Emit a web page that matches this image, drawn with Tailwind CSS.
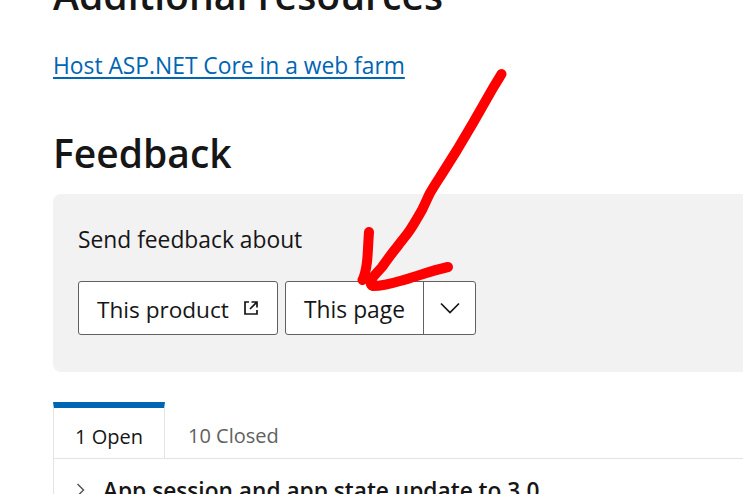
<!DOCTYPE html>
<html lang="en">
<head>
  <meta charset="UTF-8">
  <meta name="viewport" content="width=device-width, initial-scale=1.0">
  <title>Feedback</title>
  <script src="https://cdn.jsdelivr.net/npm/@tailwindcss/browser@4"></script>
</head>
<body class="bg-white h-[494px] overflow-hidden relative font-['Open_Sans',sans-serif] text-[#161616]">
  <main class="pl-[53px] -mr-6 -mt-[25px]">
    <h2 class="text-[39.2px] leading-[40px] font-semibold whitespace-nowrap">Additional resources</h2>

    <a href="#" class="block mt-[35px] text-[22.8px] leading-[32px] text-[#0065b3] underline underline-offset-[3px] decoration-[1.5px]">Host ASP.NET Core in a web farm</a>

    <h2 class="mt-[46px] text-[39px] leading-[50px] font-semibold">Feedback</h2>

    <section class="mt-[16px] h-[178px] bg-[#f2f2f2] rounded-l-lg pl-[25px] pt-[30px]">
      <p class="text-[22.8px] leading-[32px]">Send feedback about</p>
      <div class="flex mt-[25px]">
        <button class="h-[54px] w-[200px] bg-white border border-[#616161] rounded-[3px] flex items-center pl-[18px] gap-[15px]">
          <span class="text-[22.6px] pt-[3px]">This product</span>
          <svg class="w-[14px] h-[14px]" viewBox="0 0 14 14" fill="none" stroke="#161616" stroke-width="1.7">
            <path d="M5 1H1v12h12V9"/><path d="M7.5 1H13v5.5M13 1L6 8"/>
          </svg>
        </button>
        <div class="ml-[7px] flex h-[54px] bg-white border border-[#616161] rounded-[3px]">
          <button class="w-[138px] border-r border-[#616161] text-[22.8px] pt-[5px]">This page</button>
          <button class="w-[51px] flex items-center justify-center">
            <svg class="w-[20px] h-[12px]" viewBox="0 0 20 12" fill="none" stroke="#161616" stroke-width="1.7"><path d="M1 1.5l9 9 9-9"/></svg>
          </button>
        </div>
      </div>
    </section>

    <div class="mt-[30px]">
      <div class="flex h-[57px] border-b border-[#e3e3e3]">
        <div class="w-[112px] border-t-[6px] border-t-[#0065b3] border-x border-x-[#e3e3e3] flex items-center justify-center text-[20px] -mb-px pt-[6px]">1 Open</div>
        <div class="pl-[23px] flex items-center text-[20px] text-[#616161] pt-[12px]">10 Closed</div>
      </div>
      <div class="border-l border-[#e3e3e3] flex items-center pl-[22px] pt-[18px] gap-[18px]">
        <svg class="w-[9px] h-[14px] shrink-0 -mt-[3px]" viewBox="0 0 9 14" fill="none" stroke="#505050" stroke-width="1.4"><path d="M1.5 1L7.5 7l-6 6"/></svg>
        <span class="text-[22.7px] leading-[28px] font-semibold whitespace-nowrap">App session and app state update to 3.0</span>
      </div>
    </div>
  </main>

  <!-- red marker arrow drawn over the page -->
  <svg class="absolute inset-0 w-[743px] h-[494px] pointer-events-none" viewBox="0 0 743 494" fill="none" stroke="#ff0000" stroke-width="10" stroke-linecap="round" stroke-linejoin="round">
    <path d="M501.5 74C498 80 496 83 493 88L473 123L457 150L440 177C436 183 433 188 430 193C427 199 425 204 422 210C418 217 414 224 410 230C406 236 402 240 397 247C392 253 387 260 382 267L373 277"/>
    <path d="M369 232C368 245 368 253 367 262C366 270 365 275 362.5 280"/>
    <path d="M448 267C430 271 415 277 400 281C390 284 382 286 373 286C370 285 370 282 372 279"/>
  </svg>
</body>
</html>
